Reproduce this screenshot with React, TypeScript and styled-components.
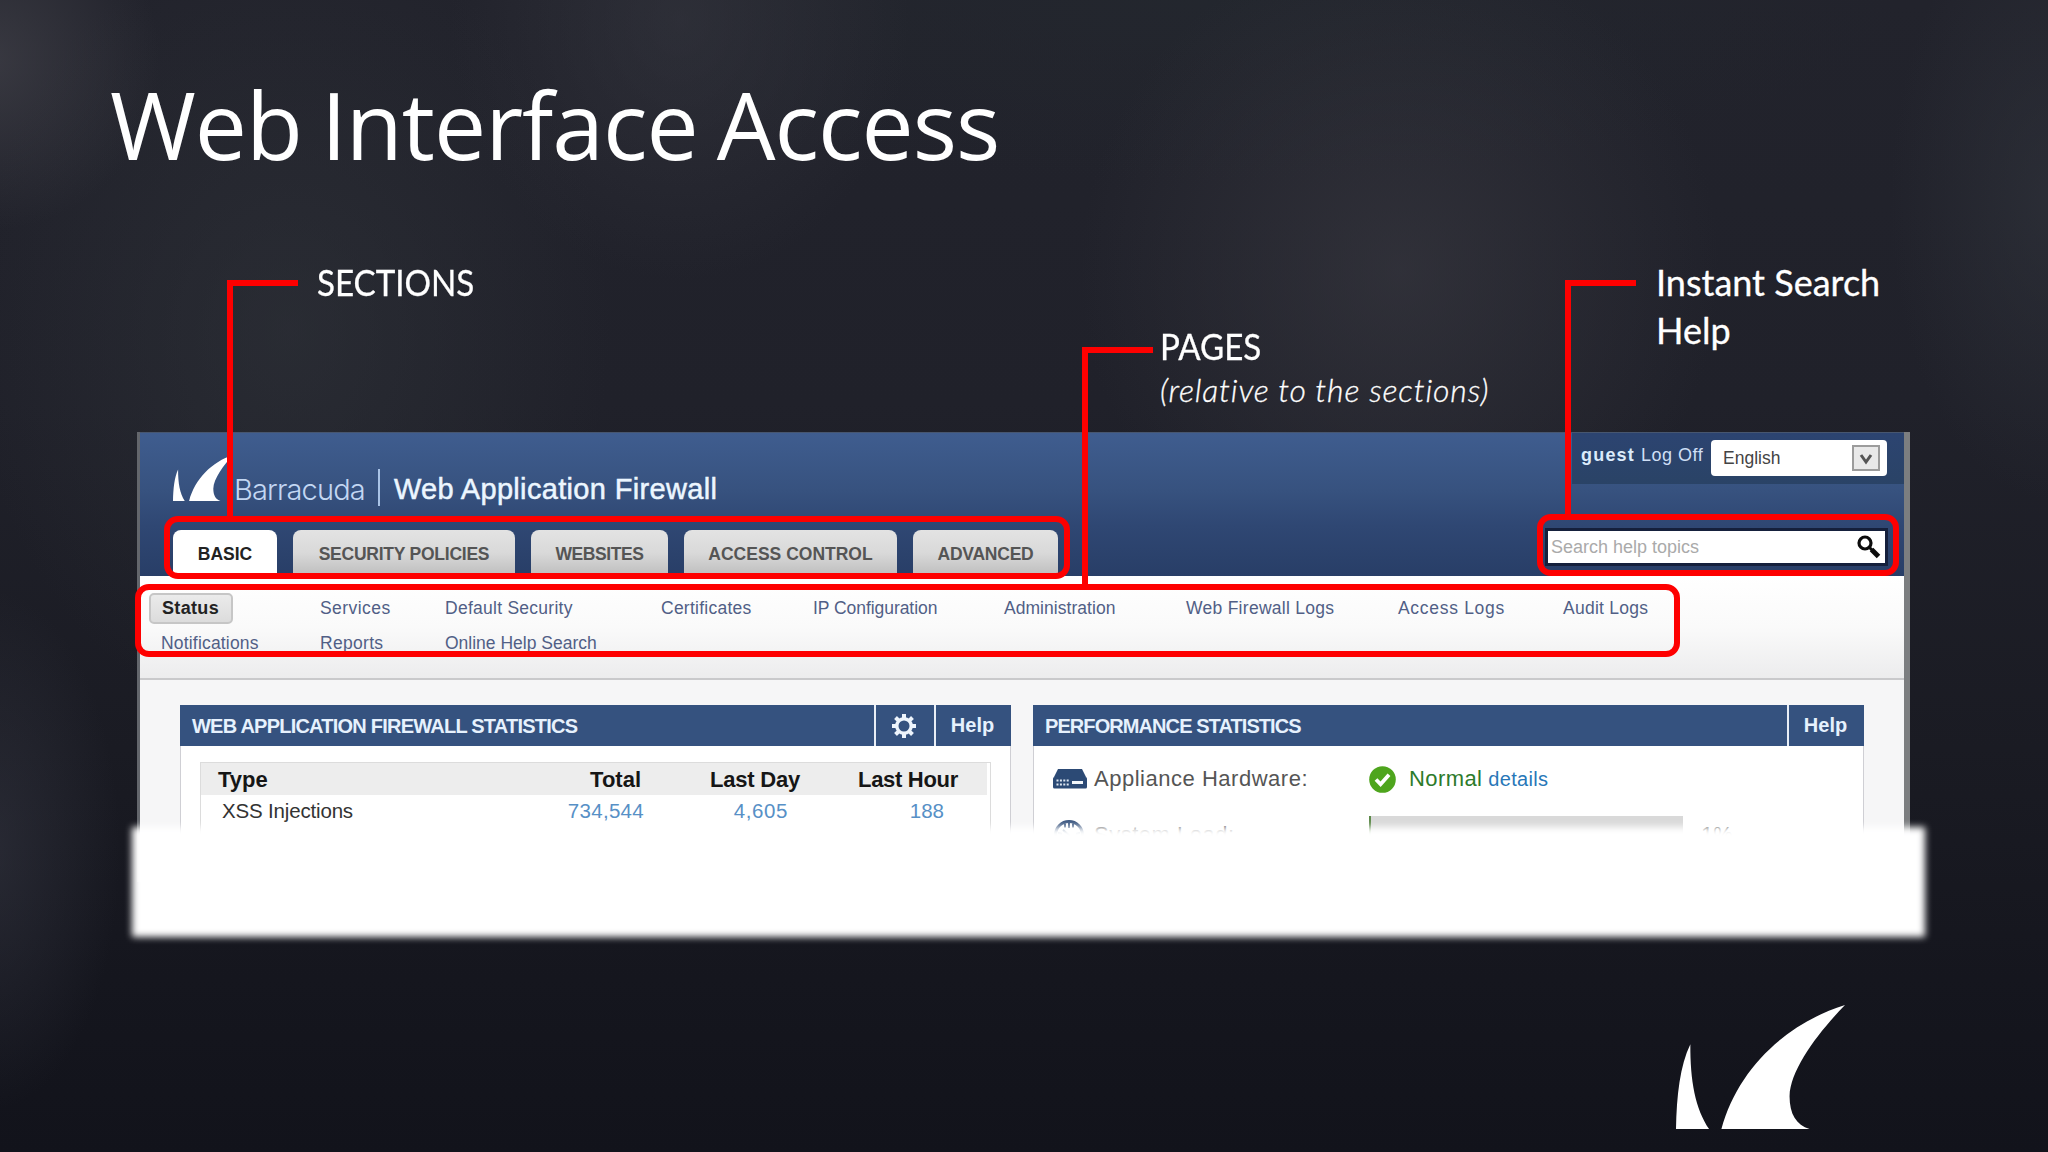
import React from 'react';
import styled, { createGlobalStyle, css } from 'styled-components';

const GlobalStyle = createGlobalStyle`
  *, *::before, *::after { box-sizing: border-box; }
  body { margin: 0; background: #15161e; }
  a { color: inherit; text-decoration: none; }
`;

const sans = css`font-family: 'Liberation Sans', Arial, sans-serif;`;

const Slide = styled.div`
  position: relative;
  display: flex;
  flex-direction: column;
  width: 2048px;
  height: 1152px;
  padding: 74px 138px 0 137px;
  overflow: hidden;
  white-space: nowrap;
  background:
    radial-gradient(circle 170px at -10px 60px, rgba(66, 66, 74, 0.7), transparent),
    radial-gradient(ellipse 230px 260px at 680px 20px, rgba(56, 57, 66, 0.5), transparent),
    radial-gradient(ellipse 320px 330px at 1400px 270px, rgba(58, 58, 66, 0.6), transparent),
    radial-gradient(ellipse 320px 400px at 290px 330px, rgba(50, 54, 60, 0.5), transparent),
    radial-gradient(ellipse 160px 300px at 2050px 200px, rgba(52, 56, 64, 0.5), transparent),
    radial-gradient(ellipse 130px 260px at -10px 850px, rgba(56, 58, 70, 0.5), transparent),
    radial-gradient(ellipse 700px 180px at 1200px 0, rgba(36, 42, 48, 0.5), transparent),
    linear-gradient(#22232c 0, #20212a 35%, #1a1b23 65%, #15161e 85%, #12131b 100%);
`;

const Title = styled.h1`
  margin: 0 0 258px -27px;
  color: #fff;
  font: 400 93px/100px 'Open Sans', sans-serif;
  letter-spacing: -1.05px;
  word-spacing: -4px;
`;

/* ---------- application window ---------- */

const AppWindow = styled.section`
  ${sans}
  display: flex;
  flex-direction: column;
  height: 450px;
  border-left: 3px solid #63666c;
  border-right: 6px solid #7c7e80;
  background: #f6f6f7;
`;

const Header = styled.header`
  display: flex;
  justify-content: space-between;
  height: 144px;
  border-top: 1px solid #47566f;
  background: linear-gradient(#3f5d8f, #37527f 40%, #2f4773 65%, #283e67);
`;

const HeaderMain = styled.div`
  display: flex;
  flex-direction: column;
  justify-content: space-between;
  padding: 19px 0 0 33px;
`;

const Brand = styled.div`
  display: flex;
  align-items: flex-end;
  height: 57px;
`;

const BrandMark = styled.svg`
  width: 60px;
  height: 46px;
  margin: 0 2px 8px 0;
`;

const BrandName = styled.span`
  margin: 0 0 -1px -1px;
  color: #c3d7f3;
  font: 300 29px/40px Inter, sans-serif;
  letter-spacing: -0.85px;
`;

const BrandRule = styled.span`
  width: 2px;
  height: 37px;
  margin: 0 14px 3px 13px;
  background: #a9c3e6;
`;

const ProductName = styled.span`
  color: #ecf6ff;
  font-size: 29px;
  line-height: 40px;
  letter-spacing: 0.33px;
  -webkit-text-stroke: 0.5px #ecf6ff;
`;

const Tabs = styled.nav`
  display: flex;
  gap: 16px;
`;

const Tab = styled.a<{ $w: number; $ls?: number; $active?: boolean }>`
  width: ${p => p.$w}px;
  height: 46px;
  border-radius: 8px 8px 0 0;
  background: ${p => (p.$active ? '#fff' : 'linear-gradient(#e3e3e3, #d9d9d9 50%, #bdbdbd)')};
  color: ${p => (p.$active ? '#222' : '#555')};
  font-size: 17.5px;
  font-weight: 700;
  line-height: 49px;
  letter-spacing: ${p => p.$ls ?? 0}px;
  text-align: center;
`;

const HeaderSide = styled.div`
  display: flex;
  flex-direction: column;
  align-items: flex-end;
  gap: 44px;
`;

const UserBar = styled.div`
  display: flex;
  width: 332px;
  height: 51px;
  padding-left: 9px;
  background: linear-gradient(#2c4471, #2a4366);
  color: #cfdff5;
  font-size: 18px;
  line-height: 45px;
`;

const UserName = styled.b`
  width: 60px;
  color: #dcebfb;
  letter-spacing: 1.2px;
`;

const LogOff = styled.a`
  width: 70px;
  letter-spacing: 0.5px;
`;

const LanguageSelect = styled.div`
  display: flex;
  align-items: center;
  justify-content: space-between;
  width: 176px;
  height: 36px;
  margin-top: 7px;
  padding: 0 7px 0 12px;
  border-radius: 4px;
  background: #fff;
  color: #444;
  font-size: 17.5px;
  line-height: 38px;
`;

const SelectArrow = styled.span`
  display: flex;
  align-items: center;
  justify-content: center;
  width: 28px;
  height: 26px;
  border: 2px solid #9c9c9c;
  background: #e9e9e9;
`;

const SearchField = styled.div`
  display: flex;
  align-items: center;
  justify-content: space-between;
  width: 343px;
  height: 38px;
  margin-right: 16px;
  padding: 0 4px 0 3px;
  border: 3px solid #15203c;
  background: #fff;
  color: #aaa;
  font-size: 18px;
  line-height: 34px;
`;

const PageNav = styled.nav`
  display: grid;
  grid-template-columns: 171px 125px 216px 152px 191px 182px 212px 165px 1fr;
  grid-template-rows: 31px 36px;
  height: 104px;
  padding: 17px 9px 0;
  border-bottom: 2px solid #c9c9cb;
  background: linear-gradient(#fff, #fafafa 50%, #ececed);
`;

const PageLink = styled.a<{ $ls?: number; $indent?: boolean }>`
  padding-left: ${p => (p.$indent ? 12 : 0)}px;
  color: #515f86;
  font-size: 17.5px;
  line-height: ${p => (p.$indent ? 38 : 31)}px;
  letter-spacing: ${p => p.$ls ?? 0}px;
`;

const PageLinkLower = styled(PageLink)`
  line-height: 38px;
`;

const CurrentPage = styled.a`
  width: 84px;
  height: 31px;
  padding-left: 11px;
  border: 2px solid #c6c6c6;
  border-radius: 5px;
  background: linear-gradient(#ebebeb, #dcdcdc);
  color: #222;
  font-size: 18px;
  font-weight: 700;
  line-height: 27px;
  letter-spacing: 0.33px;
`;

const Panels = styled.main`
  display: grid;
  grid-template-columns: 831px 831px;
  gap: 22px;
  flex: 1;
  padding: 25px 0 0 40px;
`;

const Panel = styled.section`
  display: flex;
  flex-direction: column;
`;

const PanelHeader = styled.header`
  display: flex;
  height: 41px;
  padding-left: 12px;
  background: #35527f;
  color: #e6f1fd;
  font-size: 20px;
  font-weight: 700;
  line-height: 43px;
`;

const PanelTitle = styled.h2<{ $ls: number }>`
  flex: 1;
  margin: 0;
  font: inherit;
  letter-spacing: ${p => p.$ls}px;
`;

const PanelAction = styled.a<{ $w: number }>`
  display: flex;
  align-items: center;
  justify-content: center;
  width: ${p => p.$w}px;
  padding-right: 2px;
  border-left: 2px solid #e8eef6;
`;

const PanelBody = styled.div`
  flex: 1;
  border: 1px solid #cfcfd4;
  border-top: 0;
  background: #fff;
`;

const Table = styled.div`
  height: 100%;
  margin: 16px 19px 0;
  border: 1px solid #dcdcdc;
`;

const TableHead = styled.div`
  display: grid;
  grid-template-columns: 200px 223px 159px 158px;
  height: 32px;
  padding-left: 17px;
  margin-right: 3px;
  background: #ededed;
  color: #161616;
  font-size: 22px;
  font-weight: 700;
  line-height: 34px;
`;

const TableRow = styled.div`
  display: grid;
  grid-template-columns: 200px 222px 144px 156px;
  padding-left: 21px;
  font-size: 20.5px;
  line-height: 32px;
`;

const HeadCell = styled.span<{ $right?: boolean; $ls?: number }>`
  letter-spacing: ${p => p.$ls ?? 0}px;
  text-align: ${p => (p.$right ? 'right' : 'left')};
`;

const TypeCell = styled.span`
  color: #333;
  letter-spacing: -0.17px;
`;

const CountCell = styled.a<{ $ls?: number }>`
  color: #5790c6;
  letter-spacing: ${p => p.$ls ?? 0}px;
  text-align: right;
`;

const Metrics = styled.div`
  display: grid;
  grid-template-columns: 41px 275px 332px 1fr;
  grid-template-rows: 36px 36px;
  row-gap: 20px;
  align-items: center;
  padding: 15px 0 0 19px;
  color: #555;
  font-size: 22px;
  line-height: 36px;
`;

const MetricLabel = styled.span`
  letter-spacing: 0.52px;
`;

const Status = styled.span`
  display: flex;
  align-items: center;
  gap: 13px;
  color: #2d7b2b;
  letter-spacing: 0.4px;
`;

const DetailsLink = styled.a`
  margin-left: -7px;
  color: #2877b8;
  font-size: 20px;
  letter-spacing: 0.3px;
  line-height: 37px;
`;

const LoadBar = styled.div`
  width: 314px;
  height: 38px;
  border-left: 2px solid #5d8a4a;
  background: #d9d9d9;
`;

/* ---------- annotations drawn over the window ---------- */

const Fade = styled.div`
  position: absolute;
  left: 132px;
  top: 827px;
  width: 1793px;
  height: 110px;
  background: #fff;
  filter: blur(3.5px);
`;

const Outline = styled.div<{ $x: number; $y: number; $w: number; $h: number }>`
  position: absolute;
  left: ${p => p.$x}px;
  top: ${p => p.$y}px;
  width: ${p => p.$w}px;
  height: ${p => p.$h}px;
  border: 6px solid #fe0000;
  border-radius: 14px;
`;

const Connector = styled.div<{ $x: number; $y: number; $w: number; $h: number }>`
  position: absolute;
  left: ${p => p.$x}px;
  top: ${p => p.$y}px;
  width: ${p => p.$w}px;
  height: ${p => p.$h}px;
  border: solid #fe0000;
  border-width: 6px 0 0 6px;
`;

const Callout = styled.div<{ $x: number; $y: number }>`
  position: absolute;
  left: ${p => p.$x}px;
  top: ${p => p.$y}px;
  color: #fff;
  font: 400 36px/48px Lato, sans-serif;
  -webkit-text-stroke: 0.3px #fff;
`;

const Caps = styled.span`
  display: block;
  transform: scaleX(0.92);
  transform-origin: left;
`;

const Note = styled.em`
  display: block;
  font-size: 32px;
  font-weight: 300;
  line-height: 40px;
  letter-spacing: 0.84px;
`;

const CornerMark = styled.svg`
  position: absolute;
  left: 1676px;
  top: 1005px;
  width: 169px;
  height: 124px;
`;

const Fins = () => (
  <g fill="#fff">
    <path d="M0 370 C2 270 12 180 43 117 C42 225 58 310 99 370 Z" />
    <path d="M136 370 C185 190 330 55 506 0 C430 78 342 190 340 272 C340 325 360 358 400 370 Z" />
  </g>
);

const ServerIcon = () => (
  <svg width="34" height="20" viewBox="0 0 34 20">
    <path d="M5 0H29L33 8H1Z" fill="#2c4a75" />
    <rect y="8" width="34" height="11.5" rx="1.5" fill="#2c4a75" />
    <path d="M3.5 11.5H16M3.5 15.5H16" stroke="#dfe8f2" strokeWidth="1.8" strokeDasharray="2 1.4" />
    <path d="M19 13.5H30" stroke="#f2f6fa" strokeWidth="3" />
  </svg>
);

const GaugeIcon = () => (
  <svg width="32" height="32" viewBox="0 0 32 32" fill="none" stroke="#3a567f">
    <circle cx="16" cy="16" r="13.5" strokeWidth="3" />
    <path d="M12 4.500v4M16 4v5M20 4.500v4M5 14l4 1M27 14l-4 1M10 11l7 6" strokeWidth="2" />
  </svg>
);

const CheckIcon = () => (
  <svg width="27" height="27" viewBox="0 0 27 27">
    <circle cx="13.500" cy="13.500" r="13.300" fill="#4ea51d" />
    <path d="M7 13.500l4.600 4.800L20 8.800" fill="none" stroke="#fff" strokeWidth="3.800" />
  </svg>
);

const GearIcon = () => (
  <svg width="26" height="26" viewBox="0 0 26 26" fill="none" stroke="#edf4fc">
    <circle cx="13" cy="13" r="7.200" strokeWidth="3.400" />
    <g strokeWidth="4">
      {[0, 45, 90, 135, 180, 225, 270, 315].map(a => (
        <path key={a} d="M13 1v4.500" transform={`rotate(${a} 13 13)`} />
      ))}
    </g>
  </svg>
);

const SearchIcon = () => (
  <svg width="24" height="24" viewBox="0 0 24 24" fill="none" stroke="#0c0c0c">
    <circle cx="8" cy="8" r="6" strokeWidth="3.200" />
    <path d="M12 12l3 3" strokeWidth="3" />
    <path d="M14.500 14.500l7 7" strokeWidth="5" />
  </svg>
);

const tabs = [
  { text: 'BASIC', w: 104, active: true },
  { text: 'SECURITY POLICIES', w: 222, ls: -0.24 },
  { text: 'WEBSITES', w: 137, ls: -0.42 },
  { text: 'ACCESS CONTROL', w: 213 },
  { text: 'ADVANCED', w: 145, ls: -0.23 },
];

const pages = [
  { text: 'Services', ls: 0.45 },
  { text: 'Default Security', ls: 0.26 },
  { text: 'Certificates', ls: 0.25 },
  { text: 'IP Configuration', ls: -0.05 },
  { text: 'Administration', ls: 0.04 },
  { text: 'Web Firewall Logs', ls: 0.28 },
  { text: 'Access Logs', ls: 0.7 },
  { text: 'Audit Logs', ls: 0.25 },
];

export default function App() {
  return (
    <Slide>
      <GlobalStyle />
      <Title>Web Interface Access</Title>

      <AppWindow>
        <Header>
          <HeaderMain>
            <Brand>
              <BrandMark viewBox="0 0 506 370" preserveAspectRatio="none"><Fins /></BrandMark>
              <BrandName>Barracuda</BrandName>
              <BrandRule />
              <ProductName>Web Application Firewall</ProductName>
            </Brand>
            <Tabs>
              {tabs.map(t => (
                <Tab key={t.text} $w={t.w} $ls={t.ls} $active={t.active}>{t.text}</Tab>
              ))}
            </Tabs>
          </HeaderMain>
          <HeaderSide>
            <UserBar>
              <UserName>guest</UserName>
              <LogOff>Log Off</LogOff>
              <LanguageSelect>
                English
                <SelectArrow>
                  <svg width="14" height="14" viewBox="0 0 14 14" fill="none" stroke="#555" strokeWidth="3">
                    <path d="M2 4l5 7 5-7" />
                  </svg>
                </SelectArrow>
              </LanguageSelect>
            </UserBar>
            <SearchField>
              Search help topics
              <SearchIcon />
            </SearchField>
          </HeaderSide>
        </Header>

        <PageNav>
          <CurrentPage>Status</CurrentPage>
          {pages.map(p => (
            <PageLink key={p.text} $ls={p.ls}>{p.text}</PageLink>
          ))}
          <PageLink $indent $ls={0.18}>Notifications</PageLink>
          <PageLinkLower $ls={0.3}>Reports</PageLinkLower>
          <PageLinkLower>Online Help Search</PageLinkLower>
        </PageNav>

        <Panels>
          <Panel>
            <PanelHeader>
              <PanelTitle $ls={-0.77}>WEB APPLICATION FIREWALL STATISTICS</PanelTitle>
              <PanelAction $w={60}><GearIcon /></PanelAction>
              <PanelAction $w={77}>Help</PanelAction>
            </PanelHeader>
            <PanelBody>
              <Table>
                <TableHead>
                  <HeadCell>Type</HeadCell>
                  <HeadCell $right>Total</HeadCell>
                  <HeadCell $right $ls={-0.21}>Last Day</HeadCell>
                  <HeadCell $right $ls={-0.3}>Last Hour</HeadCell>
                </TableHead>
                <TableRow>
                  <TypeCell>XSS Injections</TypeCell>
                  <CountCell $ls={0.3}>734,544</CountCell>
                  <CountCell $ls={0.6}>4,605</CountCell>
                  <CountCell>188</CountCell>
                </TableRow>
              </Table>
            </PanelBody>
          </Panel>

          <Panel>
            <PanelHeader>
              <PanelTitle $ls={-0.92}>PERFORMANCE STATISTICS</PanelTitle>
              <PanelAction $w={77}>Help</PanelAction>
            </PanelHeader>
            <PanelBody>
              <Metrics>
                <ServerIcon />
                <MetricLabel>Appliance Hardware:</MetricLabel>
                <Status>
                  <CheckIcon />
                  Normal
                  <DetailsLink>details</DetailsLink>
                </Status>
                <span />
                <GaugeIcon />
                <MetricLabel>System Load:</MetricLabel>
                <LoadBar />
                <span>1%</span>
              </Metrics>
            </PanelBody>
          </Panel>
        </Panels>
      </AppWindow>

      <Fade />

      <Connector $x={227} $y={280} $w={71} $h={240} />
      <Connector $x={1082} $y={347} $w={71} $h={240} />
      <Connector $x={1565} $y={280} $w={71} $h={237} />
      <Outline $x={164} $y={516} $w={906} $h={63} />
      <Outline $x={135} $y={584} $w={1545} $h={73} />
      <Outline $x={1537} $y={514} $w={362} $h={62} />

      <Callout $x={317} $y={258}><Caps>SECTIONS</Caps></Callout>
      <Callout $x={1160} $y={322}>
        <Caps>PAGES</Caps>
        <Note>(relative to the sections)</Note>
      </Callout>
      <Callout $x={1656} $y={258}>Instant Search<br />Help</Callout>

      <CornerMark viewBox="0 0 506 370" preserveAspectRatio="none"><Fins /></CornerMark>
    </Slide>
  );
}
